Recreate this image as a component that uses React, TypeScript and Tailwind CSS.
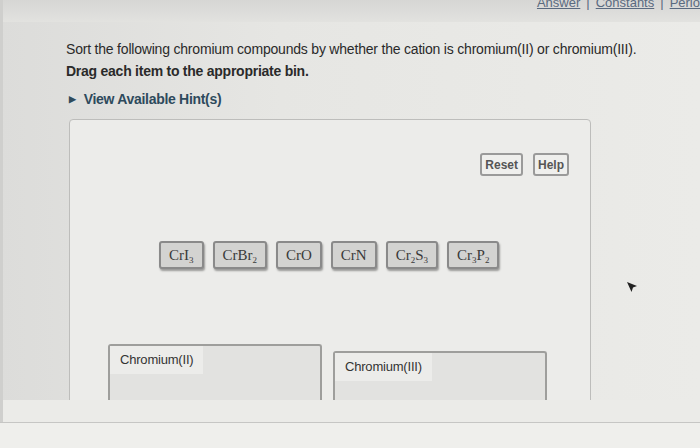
import React from "react";

const Chip = ({ children }: { children: React.ReactNode }) => (
  <div className="h-[28px] px-[8px] flex items-center rounded-[3px] border-2 border-[#8a8a8a] bg-[#d3d3d1] shadow-[1px_2px_2px_rgba(0,0,0,0.35)] text-[15px] text-[#3a3a3a]" style={{ fontFamily: '"Liberation Serif", "DejaVu Serif", serif' }}>
    <span className="leading-none">{children}</span>
  </div>
);

const Sub = ({ children }: { children: React.ReactNode }) => (
  <sub className="text-[9px] bottom-[-3px]">{children}</sub>
);

export default function App() {
  return (
    <div className="w-[700px] h-[448px] overflow-hidden relative bg-[linear-gradient(90deg,#dcdcda_0%,#e6e6e3_40%,#ebebe8_100%)]" style={{ fontFamily: '"Liberation Sans", Arial, sans-serif' }}>
      <div className="h-[400px] overflow-hidden border-l-[3px] border-[#cfcfcd]">
        <div className="h-[22px] bg-[linear-gradient(180deg,#d6d6d4,#e2e2df)] flex justify-end items-start">
          <div className="text-[13px] leading-none -mt-[4px] text-[#5a6a80] flex gap-[6px]">
            <span className="underline">Answer</span>
            <span>|</span>
            <span className="underline">Constants</span>
            <span>|</span>
            <span className="underline">Perio</span>
          </div>
        </div>
        <div className="pl-[63px] pt-[16px]">
          <p className="text-[14px] tracking-[-0.2px] text-[#2a2a2a] leading-[22px]">Sort the following chromium compounds by whether the cation is chromium(II) or chromium(III).</p>
          <p className="text-[14px] tracking-[-0.25px] font-bold text-[#2a2a2a] leading-[22px]">Drag each item to the appropriate bin.</p>
          <div className="mt-[7px] flex items-center gap-[8px] text-[#2e4a5c] font-bold text-[14px] tracking-[-0.3px]">
            <span className="text-[9px] ml-[3px]">▶</span>
            <span>View Available Hint(s)</span>
          </div>
          <div className="mt-[9px] ml-[3px] w-[522px] h-[320px] border border-[#bdbdbb] rounded-[4px] bg-[#ececea] flex flex-col">
            <div className="flex justify-end gap-[10px] pr-[21px] pt-[33px]">
              <div className="px-[3px] h-[23px] flex items-center border-2 border-[#9a9a9a] rounded-[3px] text-[12px] font-bold text-[#555] bg-[#efefed]">Reset</div>
              <div className="px-[3px] h-[23px] flex items-center border-2 border-[#9a9a9a] rounded-[3px] text-[12px] font-bold text-[#555] bg-[#efefed]">Help</div>
            </div>
            <div className="flex gap-[9px] pl-[89px] mt-[65px]">
              <Chip>CrI<Sub>3</Sub></Chip>
              <Chip>CrBr<Sub>2</Sub></Chip>
              <Chip>CrO</Chip>
              <Chip>CrN</Chip>
              <Chip>Cr<Sub>2</Sub>S<Sub>3</Sub></Chip>
              <Chip>Cr<Sub>3</Sub>P<Sub>2</Sub></Chip>
            </div>
            <div className="flex gap-[11px] pl-[38px] mt-[75px]">
              <div className="w-[214px] h-[70px] border-2 border-b-0 border-[#9e9e9c] rounded-t-[3px] bg-[#e2e2e0]">
                <div className="inline-block px-[10px] py-[4px] text-[13px] text-[#333] bg-[#ececea] tracking-[-0.2px]">Chromium(II)</div>
              </div>
              <div className="w-[214px] h-[70px] mt-[7px] border-2 border-b-0 border-[#9e9e9c] rounded-t-[3px] bg-[#e2e2e0]">
                <div className="inline-block px-[10px] py-[4px] text-[13px] text-[#333] bg-[#ececea] tracking-[-0.2px]">Chromium(III)</div>
              </div>
            </div>
          </div>
        </div>
      </div>
      <div className="h-[22px] bg-[#ebebe8] border-l-[3px] border-[#cfcfcd]" />
      <div className="h-[26px] bg-[#efefec] border-t border-[#c6c6c4]" />
      <svg className="absolute left-[626px] top-[281px]" width="12" height="14" viewBox="0 0 12 14">
        <path d="M1 1 L11 5 L7 6.5 L5.5 11 Z" fill="#222" />
      </svg>
    </div>
  );
}
